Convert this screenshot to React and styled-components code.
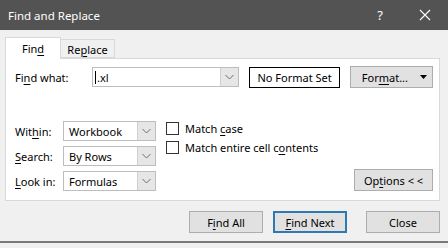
import React from "react";
import styled, { createGlobalStyle } from "styled-components";

const GlobalStyle = createGlobalStyle`
    html, body {
        margin: 0;
        padding: 0;
        background: #ffffff;
    }
    body {
        font-family: "Noto Sans", "Open Sans", sans-serif;
        font-size: 11px;
        color: #000;
    }
`;

const Window = styled.div`
    width: 448px;
    height: 248px;
    display: flex;
    flex-direction: column;
    background: #f0f0f0;
    overflow: hidden;
`;

const TitleBar = styled.div`
    height: 30px;
    flex: none;
    background: #535353;
    color: #fff;
    display: flex;
    align-items: center;
    padding-left: 8px;
    font-size: 11.5px;
`;

const TitleText = styled.div`
    flex: 1;
`;

const TitleButton = styled.div`
    width: ${p => p.$w}px;
    display: flex;
    justify-content: center;
    align-items: center;
    color: #fff;
    font-size: 13px;
`;

const Body = styled.div`
    flex: 1;
    padding: 7px 8px 0 5px;
    display: flex;
    flex-direction: column;
`;

const Tabs = styled.div`
    display: flex;
    align-items: flex-end;
    height: 21px;
    position: relative;
    z-index: 1;
`;

const Tab = styled.div`
    box-sizing: border-box;
    width: ${p => p.$w}px;
    height: ${p => (p.$active ? 22 : 19)}px;
    margin-bottom: ${p => (p.$active ? -1 : 0)}px;
    background: ${p => (p.$active ? "#fff" : "#f0f0f0")};
    border: 1px solid #d9d9d9;
    border-bottom: ${p => (p.$active ? "none" : "1px solid #d9d9d9")};
    border-left: ${p => (p.$active ? "1px solid #d9d9d9" : "none")};
    display: flex;
    justify-content: center;
    align-items: center;
    padding-top: ${p => (p.$active ? 0 : 1)}px;
`;

const Panel = styled.div`
    box-sizing: border-box;
    height: 143px;
    background: #fff;
    border: 1px solid #d9d9d9;
    padding: 8px 6px 0 9px;
    display: flex;
    flex-direction: column;
`;

const FindRow = styled.div`
    display: flex;
    align-items: center;
    height: 20px;
`;

const Label = styled.div`
    width: ${p => p.$w}px;
    flex: none;
    white-space: nowrap;
`;

const Combo = styled.div`
    box-sizing: border-box;
    width: ${p => p.$w}px;
    height: 20px;
    border: 1px solid #bdbdbd;
    display: flex;
    background: #fff;
`;

const ComboText = styled.div`
    flex: 1;
    display: flex;
    align-items: center;
    padding-left: ${p => p.$pad || 5}px;
    white-space: nowrap;
`;

const Caret = styled.span`
    display: inline-block;
    width: 1px;
    height: 13px;
    background: #000;
    margin-right: 1px;
`;

const ArrowBox = styled.div`
    width: 17px;
    flex: none;
    background: #e6e6e6;
    border-left: 1px solid #cfcfcf;
    display: flex;
    align-items: center;
    justify-content: center;
`;

const FormatBox = styled.div`
    box-sizing: border-box;
    width: 92px;
    height: 21px;
    margin-left: 10px;
    border: 1px solid #000;
    display: flex;
    align-items: center;
    justify-content: center;
`;

const Button = styled.div`
    box-sizing: border-box;
    width: ${p => p.$w}px;
    height: 22px;
    background: #e1e1e1;
    border: ${p => (p.$default ? "2px solid #2f79b3" : "1px solid #adadad")};
    display: flex;
    align-items: center;
    justify-content: center;
    margin-left: ${p => p.$ml || 0}px;
    flex: none;
`;

const MenuButton = styled(Button)`
    justify-content: flex-end;
    gap: 12px;
    padding-right: 5px;
`;

const Options = styled.div`
    margin-top: 34px;
    display: flex;
`;

const SelectGrid = styled.div`
    display: grid;
    grid-template-columns: 48px 93px;
    grid-auto-rows: 20px;
    row-gap: 5px;
    align-items: center;
`;

const Checks = styled.div`
    margin-left: 10px;
    padding-top: 1px;
    display: flex;
    flex-direction: column;
    gap: 6px;
`;

const CheckRow = styled.div`
    display: flex;
    align-items: center;
    gap: 6px;
    height: 13px;
    white-space: nowrap;
`;

const Box = styled.div`
    box-sizing: border-box;
    width: 13px;
    height: 13px;
    border: 1px solid #333;
    background: #fff;
    flex: none;
`;

const OptionsCol = styled.div`
    flex: 1;
    display: flex;
    justify-content: flex-end;
    align-items: flex-end;
`;

const Footer = styled.div`
    display: flex;
    justify-content: flex-end;
    padding-top: 10px;
`;

const BottomEdge = styled.div`
    height: 2px;
    background: #7a7a7a;
    margin-top: auto;
    margin-bottom: 5px;
    flex: none;
`;

const Under = styled.u`
    text-decoration-thickness: 1px;
    text-underline-offset: 2px;
`;

const Chevron = () => (
    <svg width="9" height="6" viewBox="0 0 9 6">
        <path d="M0.5 1 L4.5 5 L8.5 1" fill="none" stroke="#6d6d6d" strokeWidth="1" />
    </svg>
);

const Select = ({ children }) => (
    <Combo $w={93}>
        <ComboText $pad={5}>{children}</ComboText>
        <ArrowBox><Chevron /></ArrowBox>
    </Combo>
);

export default function App() {
    return <>
        <GlobalStyle />
        <Window>
            <TitleBar>
                <TitleText>Find and Replace</TitleText>
                <TitleButton $w={44}>?</TitleButton>
                <TitleButton $w={46}>
                    <svg width="12" height="12" viewBox="0 0 12 12">
                        <path d="M1 1 L11 11 M11 1 L1 11" stroke="#fff" strokeWidth="1.1" />
                    </svg>
                </TitleButton>
            </TitleBar>
            <Body>
                <Tabs>
                    <Tab $active $w={56}>Fin<Under>d</Under></Tab>
                    <Tab $w={54}>Re<Under>p</Under>lace</Tab>
                </Tabs>
                <Panel>
                    <FindRow>
                        <Label $w={77}>Fi<Under>n</Under>d what:</Label>
                        <Combo $w={149}>
                            <ComboText $pad={2}><Caret />.xl</ComboText>
                            <ArrowBox><Chevron /></ArrowBox>
                        </Combo>
                        <FormatBox>No Format Set</FormatBox>
                        <MenuButton $w={83} $ml={10}>
                            <span>For<Under>m</Under>at...</span>
                            <svg width="7" height="4" viewBox="0 0 7 4"><path d="M0 0 L7 0 L3.5 4 Z" fill="#000" /></svg>
                        </MenuButton>
                    </FindRow>
                    <Options>
                        <SelectGrid>
                            <Label $w={48}>Wit<Under>h</Under>in:</Label>
                            <Select>Workbook</Select>
                            <Label $w={48}><Under>S</Under>earch:</Label>
                            <Select>By Rows</Select>
                            <Label $w={48}><Under>L</Under>ook in:</Label>
                            <Select>Formulas</Select>
                        </SelectGrid>
                        <Checks>
                            <CheckRow><Box /><span>Match <Under>c</Under>ase</span></CheckRow>
                            <CheckRow><Box /><span>Match entire cell c<Under>o</Under>ntents</span></CheckRow>
                        </Checks>
                        <OptionsCol>
                            <Button $w={79}>Op<Under>t</Under>ions &lt; &lt;</Button>
                        </OptionsCol>
                    </Options>
                </Panel>
                <Footer>
                    <Button $w={74}>F<Under>i</Under>nd All</Button>
                    <Button $w={74} $ml={10} $default><Under>F</Under>ind Next</Button>
                    <Button $w={74} $ml={19}>Close</Button>
                </Footer>
            </Body>
            <BottomEdge />
        </Window>
    </>;
}
